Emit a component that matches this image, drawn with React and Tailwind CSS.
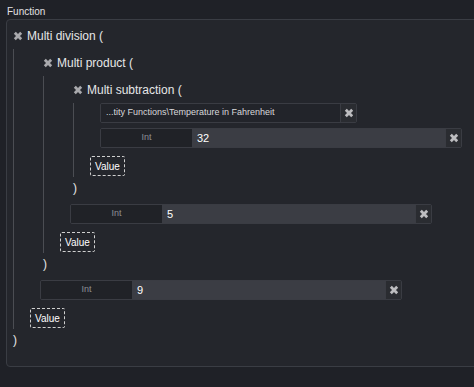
import React from 'react';

const XIcon = ({ size = 10 }) => (
  <svg viewBox="0 0 10 10" width={size} height={size}>
    <path d="M1.8 1.8 L8.2 8.2 M8.2 1.8 L1.8 8.2" stroke="currentColor" strokeWidth="2.8" strokeLinecap="butt" />
  </svg>
);

const CloseBtn = () => (
  <div className="w-[16px] h-full flex items-center justify-center bg-[#2a2c31] border-l border-[#3a3c43] text-[#bdbdc0]">
    <XIcon size={10} />
  </div>
);

const IntRow = ({ value }) => (
  <div className="ml-[10px] mt-[5px] w-[362px] h-[20px] flex border border-[#3a3c43] rounded-[2px] overflow-hidden">
    <div className="w-[91px] flex items-center justify-center bg-[#202227] text-[9px] text-[#8d8f94]">Int</div>
    <div className="flex-1 flex items-center pl-[5px] bg-[#3b3d44] text-[11px] text-white">{value}</div>
    <CloseBtn />
  </div>
);

const ValueSlot = () => (
  <div className="mt-[8px] w-[35px] h-[20px] flex items-center justify-center border border-dashed border-[#d0d0d0] rounded-[2px] text-[10px] text-white">
    Value
  </div>
);

const Block = ({ title, nested, children }) => (
  <div className={nested ? 'ml-[13px]' : ''}>
    <div className="h-[27px] flex items-center gap-[4px] text-[12px] text-[#e6e6e8]">
      <span className="text-[#a9a9ad] flex"><XIcon size={10} /></span>
      <span>{title}</span>
    </div>
    <div className="border-l border-[#4b4d53] pl-[16px] pb-px">{children}</div>
    <div className="h-[22px] flex items-center text-[12px] text-[#e6e6e8]">)</div>
  </div>
);

export default function App() {
  return (
    <div
      className="w-[474px] h-[387px] overflow-hidden bg-[#1f2127]"
      style={{ fontFamily: '"Liberation Sans", Arial, sans-serif' }}
    >
      <div className="pl-[7px] pt-[4px] h-[19px] text-[10px] text-[#e2e2e4]">Function</div>
      <div className="ml-[6px] w-[480px] h-[348px] border border-[#3a3d44] rounded-[4px] bg-[#24262c] pl-[6px] pt-[2px]">
        <Block title="Multi division (">
          <Block title="Multi product (" nested>
            <Block title="Multi subtraction (" nested>
              <div className="ml-[10px] w-[257px] h-[20px] flex border border-[#3a3c43] rounded-[2px] overflow-hidden">
                <div className="flex-1 flex items-center pl-[5px] bg-[#22242a] text-[9px] text-[#d8d8da]">
                  ...tity Functions\Temperature in Fahrenheit
                </div>
                <CloseBtn />
              </div>
              <div className="mt-[1px]">
                <IntRow value="32" />
              </div>
              <ValueSlot />
            </Block>
            <IntRow value="5" />
            <ValueSlot />
          </Block>
          <IntRow value="9" />
          <ValueSlot />
        </Block>
      </div>
    </div>
  );
}
